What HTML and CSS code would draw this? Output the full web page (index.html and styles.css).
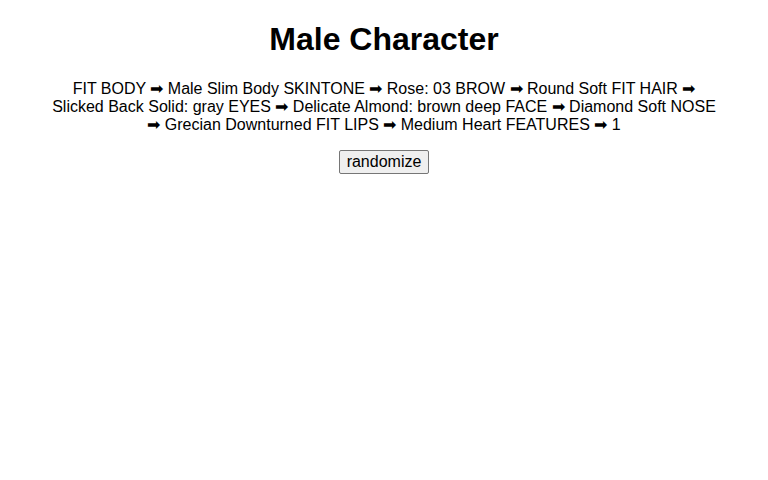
FILE: index.html
```html
<!DOCTYPE html>
<html>
<head>
<meta charset="utf-8">
<title>Male Character</title>
<link rel="stylesheet" href="styles.css">
</head>
<body class="page">
<h1 class="title">Male Character</h1>
<p class="traits">FIT BODY ➡ Male Slim Body SKINTONE ➡ Rose: 03 BROW ➡ Round Soft FIT HAIR ➡ Slicked Back Solid: gray EYES ➡ Delicate Almond: brown deep FACE ➡ Diamond Soft NOSE ➡ Grecian Downturned FIT LIPS ➡ Medium Heart FEATURES ➡ 1</p>
<div class="actions"><button class="btn" type="button">randomize</button></div>
</body>
</html>
```
FILE: styles.css
```css
.page {
  margin: 0 8px;
  padding-top: 21px;
  font-family: "Liberation Sans", Arial, sans-serif;
  font-size: 16px;
  color: #000;
  background: #fff;
  text-align: center;
}
.title {
  font-size: 32px;
  line-height: 37px;
  font-weight: bold;
  margin: 0 0 22px;
}
.traits {
  max-width: 670px;
  margin: 0 auto 16px;
  line-height: 18px;
}
.actions {
  margin: 0;
}
.btn {
  font-family: "Liberation Sans", Arial, sans-serif;
  font-size: 16px;
  line-height: 18px;
  padding: 2px 7px;
  border: 1px solid #767676;
  border-radius: 2px;
  background: #efefef;
  color: #000;
}
```
